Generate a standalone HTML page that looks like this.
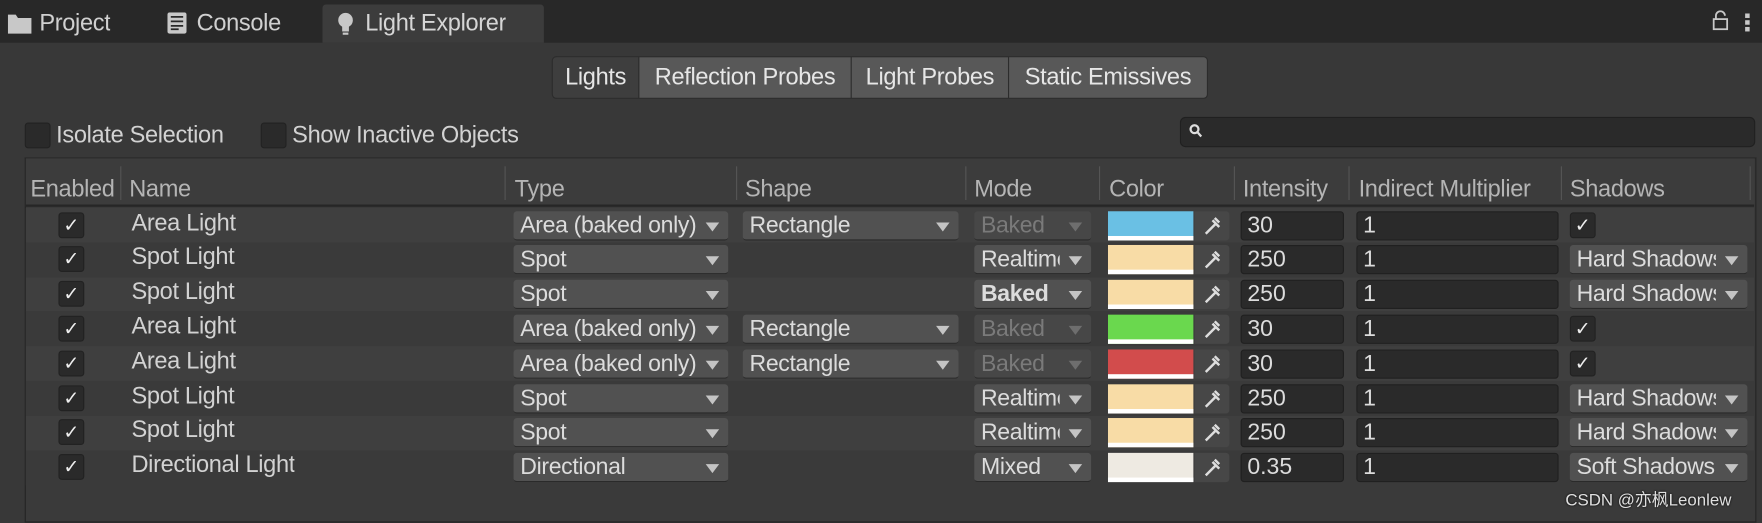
<!DOCTYPE html>
<html><head><meta charset="utf-8"><style>
*{box-sizing:border-box;margin:0;padding:0}
body{width:1762px;height:517px;overflow:hidden;background:#383838;font-family:"Liberation Sans",sans-serif;color:#d2d2d2}
#w{position:absolute;left:0;top:0;width:1568px;height:460px;transform:scale(1.12372);transform-origin:0 0;background:#383838}
.a{position:absolute}
.t{font-size:21px;white-space:nowrap;overflow:hidden;letter-spacing:-0.3px}
.dd{position:absolute;height:26px;background:#515151;border-radius:3px;border-bottom:1px solid #2a2a2a;font-size:20.5px;letter-spacing:-0.3px;padding-left:6px;line-height:25px;color:#dcdcdc;white-space:nowrap;overflow:hidden}
.dd::after{content:"";position:absolute;right:8px;top:10px;border-left:6px solid transparent;border-right:6px solid transparent;border-top:8px solid #c4c4c4}
.dd.dis{color:#7a7a7a;background:#474747}
.dd.dis::after{border-top-color:#6e6e6e}
.clip{position:absolute;left:0;top:0;bottom:0;overflow:hidden;padding-left:6px}
.fld{position:absolute;height:26px;background:#2a2a2a;border-radius:3px;border:1px solid #202020;font-size:20.5px;padding-left:5px;line-height:24px;color:#dcdcdc}
.cb{position:absolute;width:23px;height:23px;background:#2a2a2a;border:1px solid #222;border-radius:3px;color:#eee;font-size:17px;text-align:center;line-height:22px}
.row{position:absolute;left:23px;width:1538px;height:31px}
.hs{position:absolute;top:148px;width:1px;height:30px;background:#555}
</style></head><body><div id="w">
<div class="a" style="left:0;top:0;width:1568px;height:38px;background:#282828"></div>
<div class="a" style="left:287px;top:4px;width:197px;height:34px;background:#3c3c3c;border-radius:3px 3px 0 0"></div>
<svg class="a" style="left:7px;top:12px" width="21" height="18"><path d="M0 1h7l2 3h12v14H0z" fill="#c8c8c8"/></svg>
<div class="a t" style="left:35px;top:9px;color:#d0d0d0">Project</div>
<svg class="a" style="left:149px;top:11px" width="17" height="19"><rect x="0" y="0" width="17" height="19" rx="2" fill="#c8c8c8"/><path d="M3 4h11M3 8h11M3 12h11M3 15h7" stroke="#282828" stroke-width="1.6"/></svg>
<div class="a t" style="left:175px;top:9px;color:#d0d0d0">Console</div>
<svg class="a" style="left:300px;top:11px" width="15" height="20"><circle cx="7.5" cy="7" r="6.5" fill="#c8c8c8"/><rect x="4.5" y="12" width="6" height="5" fill="#c8c8c8"/><rect x="5" y="18" width="5" height="2" fill="#c8c8c8"/></svg>
<div class="a t" style="left:325px;top:9px;color:#d6d6d6">Light Explorer</div>
<svg class="a" style="left:1524px;top:9px" width="14" height="18"><path d="M3 8V5a4 4 0 0 1 8 0" stroke="#c8c8c8" stroke-width="1.6" fill="none"/><rect x="1" y="8" width="12" height="9" fill="none" stroke="#c8c8c8" stroke-width="1.6"/></svg>
<div class="a" style="left:1553px;top:12px;width:4px;height:4px;background:#c8c8c8;box-shadow:0 6px #c8c8c8,0 12px #c8c8c8"></div>

<div class="a" style="left:491px;top:50px;width:584px;height:38px;background:#2c2c2c;border-radius:4px"></div>
<div class="a t" style="left:492px;top:51px;width:76px;height:36px;background:#3e3e3e;border-radius:3px 0 0 3px;line-height:36px;text-align:center;color:#e6e6e6">Lights</div>
<div class="a t" style="left:569px;top:51px;width:188px;height:36px;background:#585858;line-height:36px;text-align:center;color:#e6e6e6">Reflection Probes</div>
<div class="a t" style="left:758px;top:51px;width:139px;height:36px;background:#585858;line-height:36px;text-align:center;color:#e6e6e6">Light Probes</div>
<div class="a t" style="left:898px;top:51px;width:176px;height:36px;background:#585858;border-radius:0 3px 3px 0;line-height:36px;text-align:center;color:#e6e6e6">Static Emissives</div>

<div class="cb" style="left:22px;top:109px"></div>
<div class="a t" style="left:50px;top:109px">Isolate Selection</div>
<div class="cb" style="left:232px;top:109px"></div>
<div class="a t" style="left:260px;top:109px">Show Inactive Objects</div>
<div class="a" style="left:1050px;top:104px;width:512px;height:27px;background:#2a2a2a;border:1px solid #202020;border-radius:5px"></div>
<svg class="a" style="left:1058px;top:110px" width="12" height="13"><circle cx="5" cy="5" r="3.5" stroke="#ddd" stroke-width="2" fill="none"/><path d="M7.5 7.5l3.5 4" stroke="#ddd" stroke-width="2"/></svg>

<div class="a" style="left:22px;top:140px;width:1541px;height:325px;border:1px solid #242424;border-top-color:#2a2a2a;background:#3a3a3a"></div>
<div class="a" style="left:23px;top:141px;width:1538px;height:43px;background:#3c3c3c;border-bottom:2px solid #262626"></div>
<div class="hs" style="left:107px"></div><div class="hs" style="left:449px"></div><div class="hs" style="left:655px"></div><div class="hs" style="left:859px"></div><div class="hs" style="left:978px"></div><div class="hs" style="left:1098px"></div><div class="hs" style="left:1200px"></div><div class="hs" style="left:1389px"></div><div class="hs" style="left:1557px"></div>
<div class="a t" style="left:27px;top:157px;width:76px;color:#b4b4b4">Enabled</div>
<div class="a t" style="left:115px;top:157px;color:#b4b4b4">Name</div>
<div class="a t" style="left:458px;top:157px;color:#b4b4b4">Type</div>
<div class="a t" style="left:663px;top:157px;color:#b4b4b4">Shape</div>
<div class="a t" style="left:867px;top:157px;color:#b4b4b4">Mode</div>
<div class="a t" style="left:987px;top:157px;color:#b4b4b4">Color</div>
<div class="a t" style="left:1106px;top:157px;color:#b4b4b4">Intensity</div>
<div class="a t" style="left:1209px;top:157px;color:#b4b4b4">Indirect Multiplier</div>
<div class="a t" style="left:1397px;top:157px;color:#b4b4b4">Shadows</div>
<div id="rows"></div>
<div class="a" style="left:1393px;top:434px;font-size:15px;color:#e0e0e0;font-family:'Liberation Sans','Noto Sans CJK SC',sans-serif;text-shadow:0 0 2px #000">CSDN @亦枫Leonlew</div>
</div>
<script>
var R=[["Area Light","Area (baked only)","Rectangle","Baked",1,"#6ac0e4","30",0],
["Spot Light","Spot","","Realtime",0,"#f8dca6","250","Hard Shadows"],
["Spot Light","Spot","","Baked",2,"#f8dca6","250","Hard Shadows"],
["Area Light","Area (baked only)","Rectangle","Baked",1,"#6ad84e","30",0],
["Area Light","Area (baked only)","Rectangle","Baked",1,"#d24c4c","30",0],
["Spot Light","Spot","","Realtime",0,"#f8dca6","250","Hard Shadows"],
["Spot Light","Spot","","Realtime",0,"#f8dca6","250","Hard Shadows"],
["Directional Light","Directional","","Mixed",0,"#eeeae2","0.35","Soft Shadows"]];
function dd(x,y,w,txt,cls,st){return '<div class="dd'+(cls||'')+'" style="left:'+x+'px;top:'+y+'px;width:'+w+'px;padding:0;'+(st||'')+'"><div class="clip" style="right:28px">'+txt+'</div></div>';}
var h="";
R.forEach(function(r,i){var y=185+i*30.8,c=y+2.5;
h+='<div class="row" style="top:'+y+'px;background:'+(i%2?'#3a3a3a':'#3f3f3f')+'"></div>';
h+='<div class="cb" style="left:52px;top:'+(c+1)+'px">✓</div>';
h+='<div class="a t" style="left:117px;top:'+(c-1)+'px">'+r[0]+'</div>';
h+=dd(457,c,191,r[1]);
if(r[2])h+=dd(661,c,192,r[2]);
h+=dd(867,c,104,r[3],r[4]==1?' dis':'',r[4]==2?'font-weight:bold;':'');
h+='<div class="a" style="left:986px;top:'+c+'px;width:76px;height:26px;background:'+r[5]+';border-bottom:4px solid #fff"></div>';
h+='<div class="a" style="left:1063px;top:'+c+'px;width:31px;height:26px;background:#474747;border-radius:0 3px 3px 0"></div>';
h+='<svg class="a" style="left:1071px;top:'+(c+4)+'px" width="16" height="18"><path d="M10 2l4 4M8 4l6 6M11 7L4 14l-2 2" stroke="#ddd" stroke-width="2.2" fill="none"/></svg>';
h+='<div class="fld" style="left:1104px;top:'+c+'px;width:92px">'+r[6]+'</div>';
h+='<div class="fld" style="left:1207px;top:'+c+'px;width:180px">1</div>';
if(r[7])h+=dd(1397,c,158,r[7]);
else h+='<div class="cb" style="left:1397px;top:'+(c+1)+'px">✓</div>';
});
document.getElementById('rows').outerHTML=h;
</script>
</body></html>
